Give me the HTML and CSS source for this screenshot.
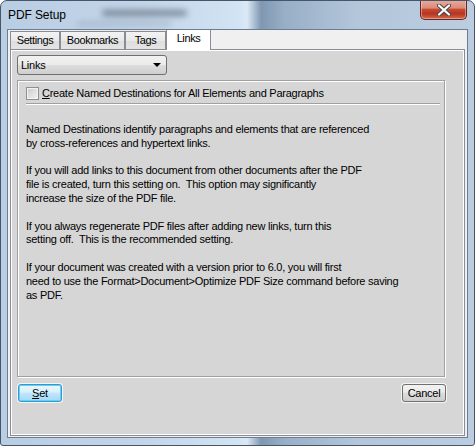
FILE: index.html
```html
<!DOCTYPE html>
<html>
<head>
<meta charset="utf-8">
<title>PDF Setup</title>
<link rel="stylesheet" href="styles.css">
</head>
<body>
<div class="window">
  <div class="titlebar">
    <span class="title">PDF Setup</span>
    <div class="smudge smudge-a"></div>
    <div class="smudge smudge-b"></div>
    <div class="close">
      <svg width="14" height="12" viewBox="0 0 14 12">
        <path d="M2 1.5 L12 10.5 M12 1.5 L2 10.5" stroke="#4a4a4a" stroke-width="4.2" stroke-linecap="round"/>
        <path d="M2 1.5 L12 10.5 M12 1.5 L2 10.5" stroke="#ffffff" stroke-width="2.2" stroke-linecap="round"/>
      </svg>
    </div>
  </div>
  <div class="client">
    <div class="tabs">
      <div class="tab w-settings">Settings</div>
      <div class="tab w-bookmarks">Bookmarks</div>
      <div class="tab w-tags">Tags</div>
      <div class="tab active w-links">Links</div>
    </div>
    <div class="page">
      <div class="select"><span>Links</span><span class="arrow"></span></div>
      <div class="group">
        <div class="check"><span class="box"></span><span><u>C</u>reate Named Destinations for All Elements and Paragraphs</span></div>
        <div class="sep"></div>
        <div class="desc">
          <p>Named Destinations identify paragraphs and elements that are referenced<br>by cross-references and hypertext links.</p>
          <p>If you will add links to this document from other documents after the PDF<br>file is created, turn this setting on.&nbsp; This option may significantly<br>increase the size of the PDF file.</p>
          <p>If you always regenerate PDF files after adding new links, turn this<br>setting off.&nbsp; This is the recommended setting.</p>
          <p>If your document was created with a version prior to 6.0, you will first<br>need to use the Format&gt;Document&gt;Optimize PDF Size command before saving<br>as PDF.</p>
        </div>
      </div>
      <div class="buttons">
        <div class="btn default"><u>S</u>et</div>
        <div class="btn">Cancel</div>
      </div>
    </div>
  </div>
</div>
</body>
</html>
```

FILE: styles.css
```css
html, body {
  margin: 0;
  padding: 0;
  background: #ffffff;
}
body {
  font-family: "Liberation Sans", Arial, sans-serif;
  font-size: 11px;
  letter-spacing: -0.25px;
  color: #000;
}
.window {
  width: 475px;
  height: 446px;
  box-sizing: border-box;
  border: 1px solid #45566b;
  border-radius: 7px 7px 3px 3px;
  background: linear-gradient(to right, #b9cde3 0%, #c3d5e8 30%, #d2e3f3 50%, #dbe9f6 52%, #7f97b1 55%, #98afc7 60%, #b3c6da 75%, #bccddf 100%);
  padding: 0 6px 7px 6px;
  display: flex;
  flex-direction: column;
  overflow: hidden;
}
.titlebar {
  height: 28px;
  display: flex;
  align-items: flex-start;
  position: relative;
}
.title {
  font-size: 12px;
  line-height: 15px;
  letter-spacing: -0.1px;
  margin: 7px 0 0 1px;
  color: #000;
  position: relative;
  z-index: 1;
}
.smudge {
  position: absolute;
  background: #3a4756;
  filter: blur(3px);
  border-radius: 4px;
}
.smudge-a {
  left: 95px;
  top: 9px;
  width: 85px;
  height: 6px;
  opacity: 0.55;
}
.smudge-b {
  left: 70px;
  top: 21px;
  width: 95px;
  height: 4px;
  opacity: 0.22;
}
.close {
  margin: -1px 1px 0 auto;
  width: 47px;
  height: 20px;
  box-sizing: border-box;
  border: 1px solid #5e2a22;
  border-top: 0;
  border-radius: 0 0 5px 5px;
  background: linear-gradient(#e9ac9d 0%, #dc8b78 42%, #c64a33 50%, #b8341f 72%, #d46a50 100%);
  box-shadow: inset 0 0 0 1px rgba(255, 220, 210, 0.45);
  display: flex;
  align-items: center;
  justify-content: center;
}
.client {
  flex: 1;
  border: 1px solid #6c7d91;
  background: #f0f0f0;
  padding: 0 2px 1px 2px;
  display: flex;
  flex-direction: column;
}
.tabs {
  display: flex;
  align-items: flex-start;
  height: 19px;
}
.tab {
  box-sizing: border-box;
  height: 18px;
  margin-top: 1px;
  border: 1px solid #898c95;
  border-bottom: 0;
  padding-top: 2px;
  line-height: 13px;
  letter-spacing: -0.4px;
  text-align: center;
  background: linear-gradient(#f3f3f3, #e9e9e9 50%, #dedede 52%, #e4e4e4);
  white-space: nowrap;
}
.tab.active {
  height: 20px;
  margin-top: 0;
  border-top: 0;
  background: #ffffff;
  position: relative;
  z-index: 1;
}
.w-settings { width: 50px; }
.w-bookmarks { width: 65px; }
.w-tags { width: 41px; }
.w-links { width: 45px; }
.page {
  flex: 1;
  border: 1px solid #898c95;
  background: #d6d6d6;
  box-shadow: inset 0 0 0 1px #ffffff;
  padding: 5px 0 0 6px;
  display: flex;
  flex-direction: column;
  align-items: flex-start;
}
.select {
  box-sizing: border-box;
  width: 150px;
  height: 20px;
  border: 1px solid #707070;
  border-radius: 3px;
  background: linear-gradient(#f2f2f2, #ebebeb 48%, #dddddd 52%, #cfcfcf);
  display: flex;
  align-items: center;
  justify-content: space-between;
  padding: 0 4px 0 3px;
  line-height: 13px;
}
.arrow {
  width: 0;
  height: 0;
  border-left: 4px solid transparent;
  border-right: 4px solid transparent;
  border-top: 4px solid #000;
  margin-right: 1px;
}
.group {
  box-sizing: border-box;
  width: 428px;
  height: 297px;
  margin-top: 5px;
  border: 1px solid #a0a0a0;
  box-shadow: inset 1px 1px 0 #ffffff, 1px 1px 0 #ffffff;
  padding: 6px 0 0 8px;
}
.check {
  display: flex;
  align-items: center;
  gap: 3px;
  line-height: 13px;
  white-space: nowrap;
}
.box {
  box-sizing: border-box;
  width: 13px;
  height: 13px;
  border: 1px solid #8e8f8f;
  background: linear-gradient(135deg, #cbcbcb, #f4f4f4);
  box-shadow: inset 0 0 0 1px #f4f4f4;
}
.sep {
  width: 414px;
  margin-top: 3px;
  border-top: 1px solid #a0a0a0;
  border-bottom: 1px solid #ffffff;
}
.desc {
  margin-top: 18px;
  line-height: 13.8px;
  white-space: nowrap;
}
.desc p {
  margin: 0 0 13.8px 0;
}
.buttons {
  margin-top: 6px;
  width: 430px;
  display: flex;
  justify-content: space-between;
}
.btn {
  box-sizing: border-box;
  width: 44px;
  height: 18px;
  margin: 1px;
  border: 1px solid #707070;
  border-radius: 3px;
  background: linear-gradient(#f2f2f2, #ebebeb 45%, #dddddd 50%, #cfcfcf);
  box-shadow: 0 0 0 1px #f4f4f4;
  line-height: 16px;
  text-align: center;
}
.btn.default {
  border-color: #2c9bd0;
  background: linear-gradient(#eaf6fd, #d9f0fc 45%, #bee6fd 50%, #a7d9f5);
  box-shadow: 0 0 0 1px #f4f4f4, inset 0 0 0 1px #6ccdf2;
}
```
